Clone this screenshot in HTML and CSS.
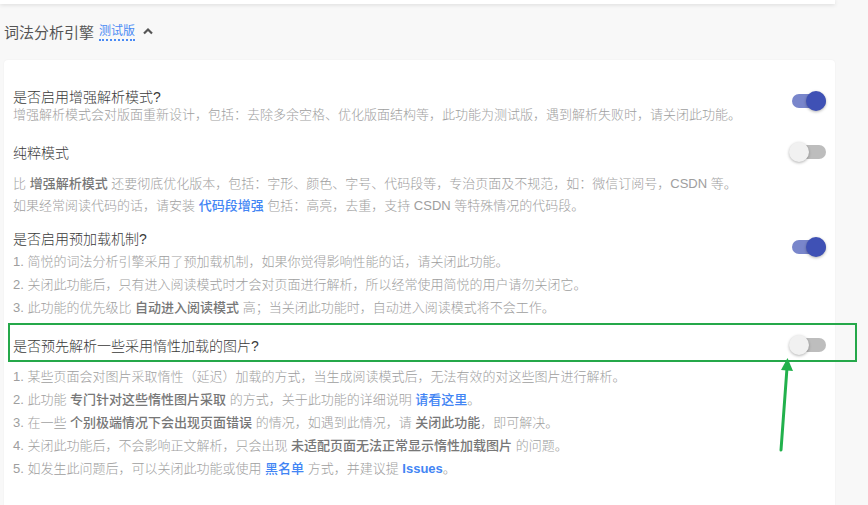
FILE: index.html
```html
<!DOCTYPE html>
<html lang="zh-CN">
<head>
    <meta charset="UTF-8">
    <title>词法分析引擎</title>
    <link rel="stylesheet" href="styles.css">
</head>
<body>
    <div class="top-strip"></div>

    <div class="section-head">
        <span class="section-title">词法分析引擎</span>
        <span class="beta">测试版</span>
        <svg class="chevron" width="12" height="8" viewBox="0 0 12 8">
            <path d="M2 6.5 L6 2.5 L10 6.5" fill="none" stroke="#555" stroke-width="2.2"/>
        </svg>
    </div>

    <div class="card">
        <div class="option opt-1">
            <div class="opt-head">
                <span class="opt-title">是否启用增强解析模式?</span>
                <span class="switch on"></span>
            </div>
            <div class="opt-desc">增强解析模式会对版面重新设计，包括：去除多余空格、优化版面结构等，此功能为测试版，遇到解析失败时，请关闭此功能。</div>
        </div>

        <div class="option opt-2">
            <div class="opt-head">
                <span class="opt-title">纯粹模式</span>
                <span class="switch"></span>
            </div>
            <div class="opt-desc">
                <div>比 <b>增强解析模式</b> 还要彻底优化版本，包括：字形、颜色、字号、代码段等，专治页面及不规范，如：微信订阅号，CSDN 等。</div>
                <div>如果经常阅读代码的话，请安装 <a href="#">代码段增强</a> 包括：高亮，去重，支持 CSDN 等特殊情况的代码段。</div>
            </div>
        </div>

        <div class="option opt-3">
            <div class="opt-head">
                <span class="opt-title">是否启用预加载机制?</span>
                <span class="switch on"></span>
            </div>
            <div class="opt-desc">
                <div>1. 简悦的词法分析引擎采用了预加载机制，如果你觉得影响性能的话，请关闭此功能。</div>
                <div>2. 关闭此功能后，只有进入阅读模式时才会对页面进行解析，所以经常使用简悦的用户请勿关闭它。</div>
                <div>3. 此功能的优先级比 <b>自动进入阅读模式</b> 高；当关闭此功能时，自动进入阅读模式将不会工作。</div>
            </div>
        </div>

        <div class="option opt-4">
            <div class="opt-head">
                <span class="opt-title">是否预先解析一些采用惰性加载的图片?</span>
                <span class="switch"></span>
            </div>
            <div class="opt-desc">
                <div>1. 某些页面会对图片采取惰性（延迟）加载的方式，当生成阅读模式后，无法有效的对这些图片进行解析。</div>
                <div>2. 此功能 <b>专门针对这些惰性图片采取</b> 的方式，关于此功能的详细说明 <a href="#">请看这里</a>。</div>
                <div>3. 在一些 <b>个别极端情况下会出现页面错误</b> 的情况，如遇到此情况，请 <b>关闭此功能</b>，即可解决。</div>
                <div>4. 关闭此功能后，不会影响正文解析，只会出现 <b>未适配页面无法正常显示惰性加载图片</b> 的问题。</div>
                <div>5. 如发生此问题后，可以关闭此功能或使用 <a href="#">黑名单</a> 方式，并建议提 <a href="#" class="latin">Issues</a>。</div>
            </div>
        </div>
    </div>

    <!-- annotation drawn over the page -->
    <div class="mark-box"></div>
    <svg class="mark-arrow" width="30" height="100" viewBox="0 0 30 100">
        <path d="M12 94 L18 12" stroke="#22b14c" stroke-width="3" stroke-linecap="round" fill="none"/>
        <path d="M18.5 2 L24 15 L12 14 Z" fill="#22b14c"/>
    </svg>
</body>
</html>
```

FILE: styles.css
```css
body {
    margin: 0;
    padding: 0;
    background-color: #f8f8f8;
    font-family: "Liberation Sans", "Noto Sans CJK SC", sans-serif;
    color: #333;
    position: relative;
    height: 505px;
    overflow: hidden;
}

.top-strip {
    width: 835px;
    height: 4px;
    background-color: #fff;
    box-shadow: 0 1px 4px rgba(0, 0, 0, 0.12);
}

.section-head {
    height: 56px;
    display: flex;
    align-items: center;
    padding-left: 4px;
}

.section-title {
    font-size: 15px;
    color: #555;
    margin-top: -1px;
}

.beta {
    font-size: 12px;
    color: #4a8af4;
    margin-left: 5px;
    margin-top: 1px;
    border-bottom: 2px dotted #4a8af4;
    line-height: 15px;
}

.chevron {
    margin-left: 7px;
    margin-top: -3px;
}

.card {
    width: 813px;
    margin-left: 4px;
    padding: 28px 9px 40px;
    background-color: #fff;
    border-radius: 4px;
    box-shadow: 0 0 2px rgba(0, 0, 0, 0.05);
}

.opt-head {
    display: flex;
    justify-content: space-between;
    align-items: center;
    height: 18px;
}

.opt-title {
    font-size: 14px;
    line-height: 18px;
    color: #3a3a3a;
    font-weight: 300;
}

.opt-desc {
    font-size: 13px;
    line-height: 23px;
    color: #9e9e9e;
    font-weight: 300;
}

.opt-desc b {
    color: #777;
    font-weight: 500;
}

.opt-desc a {
    color: #4285f4;
    font-weight: 500;
    text-decoration: none;
}

.opt-desc a.latin {
    font-weight: bold;
}

.opt-1 .opt-desc {
    line-height: 18px;
}

.opt-1 .switch {
    margin-top: 8px;
}

.opt-2 {
    margin-top: 20px;
}

.opt-2 .switch {
    margin-top: -2px;
}

.opt-2 .opt-desc {
    margin-top: 11px;
    line-height: 22px;
}

.opt-3 {
    margin-top: 13px;
}

.opt-3 .switch {
    margin-top: 16px;
}

.opt-3 .opt-desc {
    margin-top: 2px;
}

.opt-4 {
    margin-top: 18px;
}

.opt-4 .switch {
    margin-top: -2px;
}

.opt-4 .opt-desc {
    margin-top: 10px;
}

.switch {
    position: relative;
    width: 34px;
    height: 14px;
    border-radius: 7px;
    background-color: #bdbdbd;
}

.switch::after {
    content: "";
    position: absolute;
    top: -3px;
    left: -3px;
    width: 20px;
    height: 20px;
    border-radius: 50%;
    background-color: #f1f1f1;
    box-shadow: 0 1px 3px rgba(0, 0, 0, 0.3);
}

.switch.on {
    background-color: #7986cb;
}

.switch.on::after {
    left: auto;
    right: 0;
    background-color: #3f51b5;
}

.mark-box {
    position: absolute;
    left: 8px;
    top: 323px;
    width: 845px;
    height: 35px;
    border: 2px solid #25a84a;
}

.mark-arrow {
    position: absolute;
    left: 769px;
    top: 356px;
}
```
